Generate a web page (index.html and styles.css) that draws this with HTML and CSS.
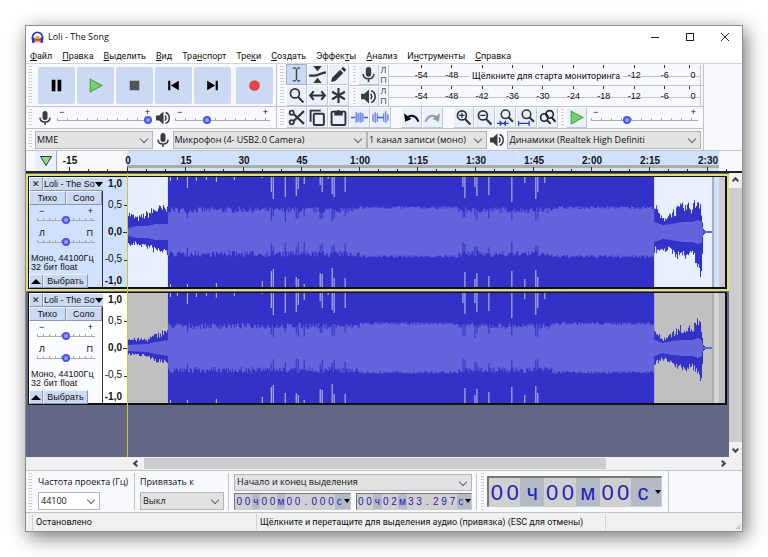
FILE: index.html
```
<!DOCTYPE html>
<html lang="ru">
<head>
    <meta charset="UTF-8">
    <meta name="viewport" content="width=device-width, initial-scale=1.0">
    <title>Loli - The Song</title>
    <link rel="stylesheet" href="styles.css">
</head>
<body>
    <!-- Icon set -->
    <svg class="defs" width="0" height="0">
        <symbol id="mic" viewBox="0 0 16 16"><rect x="5.500" y="1" width="5" height="9" rx="2.500" fill="#3c3c3c"/><path d="M3 7.500c0 3 2 4.500 5 4.500s5-1.500 5-4.500M8 12v3" fill="none" stroke="#3c3c3c" stroke-width="1.500"/></symbol>
        <symbol id="speaker" viewBox="0 0 16 16"><path d="M1 5.500h3L8.500 1.500v13L4 10.500H1z" fill="#3c3c3c"/><path d="M10 5.500c1.300 1.300 1.300 3.700 0 5M10.500 2.500c5 1.500 5 9.500 0 11" fill="none" stroke="#3c3c3c" stroke-width="1.500"/></symbol>
        <symbol id="play" viewBox="0 0 16 16"><path d="M3 2l11 6-11 6z" fill="#74d16c" stroke="#489c48"/></symbol>
        <symbol id="ibeam" viewBox="0 0 16 16"><path d="M4.500 2h3M8.500 2h3M8 2.500v11M4.500 14h3M8.500 14h3" fill="none" stroke="#444" stroke-width="1.400"/></symbol>
        <symbol id="envelope" viewBox="0 0 16 16"><path d="M4 0h8L8 5zM4 16h8l-4-5z" fill="#333"/><path d="M0 9h5c3 0 5-2 11-3" fill="none" stroke="#333" stroke-width="2"/></symbol>
        <symbol id="pencil" viewBox="0 0 16 16"><path d="M1 15l1-4 7.500-7.500 3 3L5 14zM10.500 2.500l1.500-1.500c.6-.6 3.600 2.400 3 3L13.500 5.500z" fill="#333"/></symbol>
        <symbol id="lens" viewBox="0 0 16 16"><circle cx="6.500" cy="6" r="4.200" fill="none" stroke="#333" stroke-width="1.600"/><path d="M9.500 9.500L14.500 14.500" stroke="#333" stroke-width="2"/></symbol>
        <symbol id="shift" viewBox="0 0 16 16"><path d="M2 8h12M4.500 4L1 8l3.500 4M11.500 4L15 8l-3.500 4" fill="none" stroke="#333" stroke-width="1.800"/></symbol>
        <symbol id="multi" viewBox="0 0 16 16"><path d="M8 1v14M2 4.500l12 7M14 4.500l-12 7" stroke="#333" stroke-width="2"/></symbol>
        <symbol id="cut" viewBox="0 0 16 16"><circle cx="3.500" cy="3.500" r="2" fill="none" stroke="#333" stroke-width="1.600"/><circle cx="3.500" cy="12.500" r="2" fill="none" stroke="#333" stroke-width="1.600"/><path d="M5 4.500L15 14M5 11.500L15 2" stroke="#333" stroke-width="2"/></symbol>
        <symbol id="copy" viewBox="0 0 16 16"><path d="M1.500 12V1.500H11" fill="none" stroke="#333" stroke-width="1.800"/><rect x="4.500" y="4.500" width="9.500" height="10.500" rx="1" fill="none" stroke="#333" stroke-width="1.800"/></symbol>
        <symbol id="paste" viewBox="0 0 16 16"><rect x="1.500" y="2.500" width="13" height="12.500" rx="1" fill="none" stroke="#333" stroke-width="1.800"/><path d="M4 2h2.500a1.600 1.600 0 0 1 3 0H12v4H4z" fill="#333"/></symbol>
        <symbol id="trim" viewBox="0 0 16 16"><path d="M0 8h4M12 8h4" stroke="#4a5ad8" stroke-width="1.500"/><path d="M5 3v10M7 4v8M9 3v10M11 4v8" stroke="#7f8ee8" stroke-width="1.700"/></symbol>
        <symbol id="silence" viewBox="0 0 16 16"><path d="M1 5v7M3 3v10M5 4v8M11 4v8M13 2v11M15 5v6" stroke="#7f8ee8" stroke-width="1.500"/><path d="M5 8h6" stroke="#4a5ad8" stroke-width="1.500"/></symbol>
        <symbol id="undo" viewBox="0 0 16 16"><path d="M3 9.500C6 5 12 5 14.500 12" fill="none" stroke="currentColor" stroke-width="2"/><path d="M1 4l1 8 6-2.500z" fill="currentColor"/></symbol>
        <symbol id="zoom-in" viewBox="0 0 16 16"><use href="#lens"/><path d="M4 6h5M6.500 3.500v5" stroke="#333" stroke-width="1.200"/></symbol>
        <symbol id="zoom-out" viewBox="0 0 16 16"><use href="#lens"/><path d="M4 6h5" stroke="#333" stroke-width="1.200"/></symbol>
        <symbol id="zoom-sel" viewBox="0 0 16 16"><circle cx="8" cy="5" r="4" fill="none" stroke="#333" stroke-width="1.500"/><path d="M11 8l4 4" stroke="#333" stroke-width="2"/><path d="M0 13.500h11M3 11.500l1.500 2L3 15.500zM8 11.500l-1.500 2 1.500 2z" fill="#2e3fd0" stroke="#2e3fd0"/></symbol>
        <symbol id="zoom-fit" viewBox="0 0 16 16"><circle cx="8" cy="5" r="4" fill="none" stroke="#333" stroke-width="1.500"/><path d="M11 8l4 4" stroke="#333" stroke-width="2"/><path d="M.5 11v5M10.500 11v5M1 13.500h9" stroke="#2e3fd0" stroke-width="1.200"/></symbol>
        <symbol id="zoom-toggle" viewBox="0 0 16 16"><circle cx="5" cy="8" r="3.500" fill="none" stroke="#222" stroke-width="1.500"/><circle cx="10" cy="5" r="3.500" fill="none" stroke="#222" stroke-width="1.500"/><path d="M7 10l4 4M12 8l3.500 4" stroke="#222" stroke-width="1.800"/></symbol>
    </svg>

    <div class="window">
        <header class="titlebar">
            <svg class="logo" viewBox="0 0 14 14"><path d="M1.500 9V7a5.500 5.500 0 0 1 11 0v2" fill="none" stroke="#2a35d8" stroke-width="1.800"/><path d="M4 7.500l1.500-1.500L7 5l1.500 1L10 7.500V12H4z" fill="#f6a623"/><path d="M4 8.500h6v2H4z" fill="#e8402a"/><rect x="1" y="7" width="3" height="6" rx="1.200" fill="#2a35d8"/><rect x="10" y="7" width="3" height="6" rx="1.200" fill="#2a35d8"/></svg>
            <h1>Loli - The Song</h1>
            <div class="window-buttons">
                <button aria-label="Свернуть"><svg viewBox="0 0 10 10"><path d="M1 5.500h8" stroke="#222"/></svg></button>
                <button aria-label="Развернуть"><svg viewBox="0 0 10 10"><rect x="1.500" y="1.500" width="7" height="7" fill="none" stroke="#222"/></svg></button>
                <button aria-label="Закрыть"><svg viewBox="0 0 10 10"><path d="M1 1l8 8M9 1L1 9" stroke="#222"/></svg></button>
            </div>
        </header>

        <nav class="menu">
            <a href="#"><u>Ф</u>айл</a>
            <a href="#"><u>П</u>равка</a>
            <a href="#"><u>В</u>ыделить</a>
            <a href="#"><u>В</u>ид</a>
            <a href="#">Тра<u>н</u>спорт</a>
            <a href="#">Тре<u>к</u>и</a>
            <a href="#"><u>С</u>оздать</a>
            <a href="#">Эффек<u>т</u>ы</a>
            <a href="#"><u>А</u>нализ</a>
            <a href="#">И<u>н</u>струменты</a>
            <a href="#"><u>С</u>правка</a>
        </nav>

        <div class="dock">
            <div class="dock-left">
                <div class="bar transport">
                    <span class="grip"></span>
                    <button aria-label="Пауза"><svg viewBox="0 0 16 16"><path d="M3.500 2.500h3.500v11H3.500zM9 2.500h3.500v11H9z"/></svg></button>
                    <button aria-label="Воспроизвести"><svg viewBox="0 0 16 16"><use href="#play"/></svg></button>
                    <button aria-label="Стоп"><svg viewBox="0 0 16 16"><path d="M3.500 3.500h9v9h-9z" fill="#555"/></svg></button>
                    <button aria-label="К началу"><svg viewBox="0 0 16 16"><path d="M3 3.500h2v9H3zM13 3.500v9L5.500 8z"/></svg></button>
                    <button aria-label="К концу"><svg viewBox="0 0 16 16"><path d="M11 3.500h2v9h-2zM3 3.500v9L10.500 8z"/></svg></button>
                    <button class="record" aria-label="Запись"><svg viewBox="0 0 16 16"><circle cx="8" cy="8" r="5" fill="#e04646"/></svg></button>
                </div>
                <div class="bar mixer">
                    <span class="grip"></span>
                    <svg class="icon"><use href="#mic"/></svg>
                    <label class="slider"><span>−</span><span>+</span><input type="range" value="100" aria-label="Громкость записи"></label>
                    <svg class="icon"><use href="#speaker"/></svg>
                    <label class="slider"><span>−</span><span>+</span><input type="range" value="32" aria-label="Громкость воспроизведения"></label>
                </div>
            </div>

            <div class="dock-main">
                <div class="bar upper">
                    <span class="grip"></span>
                    <div class="tools">
                        <button class="tool active" aria-label="Выделение"><svg><use href="#ibeam"/></svg></button>
                        <button class="tool" aria-label="Огибающая"><svg><use href="#envelope"/></svg></button>
                        <button class="tool" aria-label="Рисование"><svg><use href="#pencil"/></svg></button>
                        <button class="tool" aria-label="Масштаб"><svg><use href="#lens"/></svg></button>
                        <button class="tool" aria-label="Перемещение"><svg><use href="#shift"/></svg></button>
                        <button class="tool" aria-label="Мультиинструмент"><svg><use href="#multi"/></svg></button>
                    </div>
                    <div class="meters">
                        <div class="meter">
                            <span class="grip"></span>
                            <button class="tool" aria-label="Индикатор записи"><svg><use href="#mic"/></svg></button>
                            <div class="channels"><span>Л</span><span>П</span></div>
                            <div class="scale"><span>-54</span><span>-48</span><span></span><span></span><span></span><span></span><span></span><span>-12</span><span>-6</span><span>0</span>
                                <button class="monitor">Щёлкните для старта мониторинга</button>
                            </div>
                        </div>
                        <div class="meter">
                            <span class="grip"></span>
                            <button class="tool" aria-label="Индикатор воспроизведения"><svg><use href="#speaker"/></svg></button>
                            <div class="channels"><span>Л</span><span>П</span></div>
                            <div class="scale"><span>-54</span><span>-48</span><span>-42</span><span>-36</span><span>-30</span><span>-24</span><span>-18</span><span>-12</span><span>-6</span><span>0</span></div>
                        </div>
                    </div>
                </div>
                <div class="bar edit">
                    <span class="grip"></span>
                    <div class="group">
                        <button class="tool" aria-label="Вырезать"><svg><use href="#cut"/></svg></button>
                        <button class="tool" aria-label="Копировать"><svg><use href="#copy"/></svg></button>
                        <button class="tool" aria-label="Вставить"><svg><use href="#paste"/></svg></button>
                        <button class="tool" aria-label="Обрезать"><svg><use href="#trim"/></svg></button>
                        <button class="tool" aria-label="Тишина"><svg><use href="#silence"/></svg></button>
                    </div>
                    <div class="group">
                        <button class="tool" aria-label="Отменить"><svg><use href="#undo"/></svg></button>
                        <button class="tool redo" aria-label="Вернуть"><svg><use href="#undo"/></svg></button>
                    </div>
                    <div class="group">
                        <button class="tool" aria-label="Приблизить"><svg><use href="#zoom-in"/></svg></button>
                        <button class="tool" aria-label="Отдалить"><svg><use href="#zoom-out"/></svg></button>
                        <button class="tool" aria-label="Выделенное по ширине"><svg><use href="#zoom-sel"/></svg></button>
                        <button class="tool" aria-label="Проект по ширине"><svg><use href="#zoom-fit"/></svg></button>
                        <button class="tool" aria-label="Переключить масштаб"><svg><use href="#zoom-toggle"/></svg></button>
                    </div>
                    <span class="grip"></span>
                    <button class="tool" aria-label="Воспроизвести на скорости"><svg><use href="#play"/></svg></button>
                    <label class="slider"><span>−</span><span>+</span><input type="range" value="32" aria-label="Скорость"></label>
                </div>
            </div>
            <div class="dock-end"></div>
        </div>

        <div class="bar devices">
            <span class="grip"></span>
            <span class="drop host"><select aria-label="Хост"><option>MME</option></select></span>
            <svg class="icon"><use href="#mic"/></svg>
            <span class="drop input"><select aria-label="Устройство записи"><option>Микрофон (4- USB2.0 Camera)</option></select></span>
            <span class="drop count"><select aria-label="Каналы записи"><option>1 канал записи (моно)</option></select></span>
            <svg class="icon"><use href="#speaker"/></svg>
            <span class="drop output"><select aria-label="Устройство воспроизведения"><option>Динамики (Realtek High Definiti</option></select></span>
            <span class="dock-end"></span>
        </div>

        <div class="timeline">
            <button class="pin" aria-label="Указатель"><svg viewBox="0 0 14 12"><path d="M1.500 1.500h11L7 10.500z" fill="#8be08b" stroke="#333"/></svg></button>
            <div class="ruler" id="ruler"></div>
        </div>

        <main class="workspace">
            <div class="tracks">
                <section class="track selected">
                    <div class="panel">
                        <div class="panel-row head"><button aria-label="Закрыть трек">✕</button><button class="name">Loli - The So<i></i></button></div>
                        <div class="panel-row"><button>Тихо</button><button>Соло</button></div>
                        <label class="slider"><span>−</span><span>+</span><input type="range" aria-label="Усиление"></label>
                        <label class="slider"><span>Л</span><span>П</span><input type="range" aria-label="Панорама"></label>
                        <p>Моно, 44100Гц<br>32 бит float</p>
                        <div class="panel-row foot"><button aria-label="Свернуть трек"><i></i></button><button>Выбрать</button></div>
                    </div>
                    <div class="levels"><b>1,0</b><span>0,5</span><b>0,0</b><span>-0,5</span><b>-1,0</b></div>
                    <svg class="wave" data-track="0" viewBox="0 0 599 110" preserveAspectRatio="none"></svg>
                </section>
                <section class="track">
                    <div class="panel">
                        <div class="panel-row head"><button aria-label="Закрыть трек">✕</button><button class="name">Loli - The So<i></i></button></div>
                        <div class="panel-row"><button>Тихо</button><button>Соло</button></div>
                        <label class="slider"><span>−</span><span>+</span><input type="range" aria-label="Усиление"></label>
                        <label class="slider"><span>Л</span><span>П</span><input type="range" aria-label="Панорама"></label>
                        <p>Моно, 44100Гц<br>32 бит float</p>
                        <div class="panel-row foot"><button aria-label="Свернуть трек"><i></i></button><button>Выбрать</button></div>
                    </div>
                    <div class="levels"><b>1,0</b><span>0,5</span><b>0,0</b><span>-0,5</span><b>-1,0</b></div>
                    <svg class="wave" data-track="1" viewBox="0 0 599 110" preserveAspectRatio="none"></svg>
                </section>
                <div class="cursor"></div>
            </div>
            <div class="vscroll"><i class="arrow up"></i><span></span><i class="arrow down"></i></div>
        </main>
        <div class="hscroll"><i class="arrow left"></i><span></span><i class="arrow right"></i></div>

        <footer>
            <div class="bar selection">
                <span class="grip"></span>
                <div class="field rate">
                    <label for="rate">Частота проекта (Гц)</label>
                    <span class="drop white"><select id="rate"><option>44100</option></select></span>
                </div>
                <div class="field snap">
                    <label for="snap">Привязать к</label>
                    <span class="drop"><select id="snap"><option>Выкл</option></select></span>
                </div>
                <div class="field range">
                    <span class="drop"><select aria-label="Тип выделения"><option>Начало и конец выделения</option></select></span>
                    <div class="times">
                        <div class="time" data-time="00ч00м00.000с"></div>
                        <div class="time" data-time="00ч02м33.297с"></div>
                    </div>
                </div>
                <span class="grip"></span>
                <div class="time big" data-time="00ч00м00с"></div>
                <span class="rest"></span>
            </div>
            <div class="status">
                <span class="stub"></span>
                <span class="state">Остановлено</span>
                <span class="hint">Щёлкните и перетащите для выделения аудио (привязка) (ESC для отмены)</span>
                <span class="corner"></span>
            </div>
        </footer>
    </div>
    <script src="script.js"></script>
</body>
</html>
```
FILE: styles.css
```
* {
    margin: 0;
    padding: 0;
    box-sizing: border-box;
}

body {
    min-height: 100vh;
    padding: 25px;
    display: flex;
    background: #fff;
    color: #111;
    font: 10px/12px "Liberation Sans", Arial, sans-serif;
}

.defs {
    position: absolute;
}

button, select {
    font: inherit;
    color: inherit;
    border: none;
    background: none;
}

button {
    display: flex;
    align-items: center;
    justify-content: center;
}

.window {
    flex: 1;
    min-width: 0;
    display: flex;
    flex-direction: column;
    border: 1px solid #8e8e8e;
    background: #f7f9ff;
    box-shadow: 3px 5px 18px rgba(0, 0, 0, 0.55);
}

/* Title and menu */
.titlebar {
    height: 22px;
    padding-left: 5px;
    display: flex;
    align-items: center;
    gap: 4px;
    background: #fff;
}

.logo {
    width: 13px;
    height: 13px;
}

h1 {
    flex: 1;
    font: 9px/14px "Open Sans", sans-serif;
}

.window-buttons {
    display: flex;
}

.window-buttons button {
    width: 35px;
    height: 20px;
}

.window-buttons svg {
    width: 10px;
    height: 10px;
}

.menu {
    height: 16px;
    padding-left: 4px;
    display: flex;
    align-items: center;
    gap: 10px;
    background: #fff;
    border-bottom: 1px solid #d4d4d4;
    font: 9px/14px Roboto, sans-serif;
}

.menu a {
    color: #111;
    text-decoration: none;
}

/* Toolbars */
.dock {
    display: flex;
}

.dock-left {
    width: 251px;
    border-right: 1px solid #c4c4c4;
}

.dock-main {
    flex: 1;
    min-width: 0;
}

.dock-end {
    width: 39px;
    align-self: stretch;
    border-left: 1px solid #c4c4c4;
}

.bar {
    display: flex;
    align-items: center;
    border-bottom: 1px solid #c4c4c4;
}

.grip {
    flex: none;
    width: 8px;
    align-self: stretch;
    border: solid #f7f9ff;
    border-width: 2px 2px 2px 3px;
    background: repeating-linear-gradient(#cfcfcf 0 1px, #f7f9ff 1px 3px);
}

.transport, .upper {
    height: 43px;
}

.transport {
    gap: 2px;
}

.transport .grip {
    margin-right: 2px;
}

.transport button {
    width: 37px;
    height: 37px;
    border-radius: 2px;
    background: #ccd9f2;
}

.transport .record {
    margin-left: 3px;
}

.transport svg {
    width: 17px;
    height: 17px;
}

.mixer, .edit {
    height: 22px;
}

.icon {
    flex: none;
    width: 16px;
    height: 16px;
}

.mixer {
    gap: 4px;
}

.mixer .slider {
    flex: 1;
}

.mixer .slider:last-child {
    margin-right: 6px;
}

.mixer .icon {
    margin-left: -1px;
}

.slider {
    display: grid;
    grid-template-columns: 1fr auto;
    padding: 0 2px 3px;
    font-size: 9px;
    line-height: 8px;
}

.slider input {
    grid-column: 1 / 3;
    min-width: 0;
    margin: 0 -2px;
    height: 8px;
    appearance: none;
    background:
        linear-gradient(#aaa, #aaa) 0 4px / 100% 1px no-repeat,
        repeating-linear-gradient(90deg, #aaa 0 1px, transparent 1px 10px) 0 2px / 100% 3px no-repeat;
}

.slider input::-webkit-slider-thumb {
    appearance: none;
    width: 8px;
    height: 8px;
    border: 2px solid #4a55e6;
    border-radius: 50%;
    background: #98a0f4;
}

.tool {
    flex: none;
    width: 21px;
    height: 21px;
    border: 1px solid;
    border-color: #fff #c3c9d6 #c3c9d6 #fff;
    background: #e9f1ff;
}

.tool.active {
    background: #ccd9f2;
    border-color: #9fb0cc;
}

.tool svg {
    width: 17px;
    height: 17px;
}

.redo {
    color: #999;
}

.redo svg {
    transform: scaleX(-1);
}

.tools {
    display: grid;
    grid-template-columns: repeat(3, 21px);
    margin-right: 1px;
}

.upper > .grip, .edit > .grip:first-child {
    width: 9px;
}

.meters {
    flex: 1;
    min-width: 0;
}

.meter {
    height: 21px;
    display: flex;
    align-items: center;
}

.meter + .meter {
    border-top: 1px solid #c4c4c4;
}

.channels {
    width: 9px;
    display: flex;
    flex-direction: column;
    text-align: center;
    font-size: 9px;
    line-height: 10px;
    color: #456;
}

.scale {
    flex: 1;
    position: relative;
    height: 20px;
    margin-right: 2px;
    padding-left: 17px;
    display: flex;
    border: solid #c4c4c4;
    border-width: 0 1px;
    background: linear-gradient(#c4c4c4, #c4c4c4) 0 11px / 100% 1px no-repeat;
}

.scale span {
    flex: 1;
    text-align: center;
    background: linear-gradient(#333, #333) center top / 1px 3px no-repeat;
    line-height: 20px;
    font-size: 9px;
}

.scale span:nth-child(10) {
    flex: none;
    width: 20px;
    padding-left: 6px;
}

.monitor {
    position: absolute;
    left: 80px;
    top: 5px;
    height: 12px;
    padding: 0 3px;
    background: #f7f9ff;
    font: 9px/12px Roboto, sans-serif;
    white-space: nowrap;
}

.group {
    display: flex;
    margin-right: 10px;
}

.group:nth-of-type(3) {
    margin-right: 0;
}

.edit .slider {
    flex: 1;
    margin: 0 5px 0 4px;
}

.devices {
    height: 22px;
    background: #f7f9ff;
}

.drop {
    position: relative;
    display: flex;
    height: 18px;
    border: 1px solid #b5b5b5;
    background: #e2e2e2;
}

.drop select {
    width: 100%;
    padding: 0 14px 0 2px;
    appearance: none;
    outline: none;
}

.drop::after {
    content: "";
    position: absolute;
    right: 5px;
    top: 4px;
    width: 5px;
    height: 5px;
    border: solid #666;
    border-width: 0 1px 1px 0;
    transform: rotate(45deg);
    pointer-events: none;
}

.devices .drop select {
    padding-left: 1px;
    font: 9px/14px "Open Sans", sans-serif;
}

.devices .icon {
    margin: 0 2px;
}

.host {
    flex: 117;
    margin-left: 1px;
}

.input {
    flex: 195;
}

.count {
    flex: 120;
}

.output {
    flex: 194;
}

.devices .dock-end {
    margin-left: 2px;
}

/* Time ruler */
.timeline {
    display: flex;
    height: 22px;
    border-bottom: 2px solid #222;
}

.pin {
    width: 22px;
    margin-left: 9px;
    border-right: 1px solid #aaa;
    background: #e9f1ff;
}

.pin svg {
    width: 14px;
    height: 12px;
}

.ruler {
    flex: 1;
    min-width: 0;
    padding-left: 12px;
    display: flex;
    overflow: hidden;
    background:
        linear-gradient(#ababab, #ababab) 70px 14px / 592px 3px no-repeat,
        linear-gradient(#d0e0ff, #d0e0ff) 70px 0 / 592px 100% no-repeat;
}

.ruler span {
    flex: none;
    width: 58px;
    font: bold 10px/20px "Liberation Sans", Arial, sans-serif;
    background:
        linear-gradient(#333, #333) 0 100% / 1px 4px no-repeat,
        linear-gradient(#333, #333) 19px 100% / 1px 2px no-repeat,
        linear-gradient(#333, #333) 38px 100% / 1px 2px no-repeat;
}

.ruler b {
    display: block;
    width: 58px;
    margin-left: -28px;
    text-align: center;
}

/* Tracks */
.workspace {
    flex: 1;
    display: flex;
    background: #646784;
}

.tracks {
    flex: 1;
    min-width: 0;
    position: relative;
    padding: 3px 1px 0;
}

.track {
    display: flex;
    height: 113px;
    margin: 0 1px 3px 1px;
    border: 1px solid #111;
    border-width: 1px 2px 2px 1px;
}

.track.selected {
    outline: 2px solid #dede74;
}

.panel {
    flex: none;
    width: 74px;
    background: #fbfcff;
    border-right: 1px solid #333;
    font-size: 9px;
    line-height: 9px;
}

.selected .panel {
    background: #d0e0ff;
}

.panel-row {
    display: flex;
    height: 14px;
}

.panel-row button {
    flex: 1;
    border: 1px solid;
    border-color: #eef3ff #8c97ad #8c97ad #eef3ff;
    background: #ccd9f2;
    white-space: nowrap;
}

.panel-row.head button:first-child, .panel-row.foot button:first-child {
    flex: none;
    width: 14px;
}

.panel-row i {
    border: solid transparent;
    border-width: 5px 4px 0;
    border-top-color: #000;
}

.foot i {
    border-width: 0 5px 5px;
    border-bottom-color: #000;
}

.panel .slider {
    margin: 2px 7px 0 8px;
    height: 20px;
}

.panel .slider input {
    background:
        linear-gradient(#aaa, #aaa) 0 4px / 100% 1px no-repeat,
        repeating-linear-gradient(90deg, #aaa 0 1px, transparent 1px 6px) 0 2px / 100% 3px no-repeat;
}

.panel p {
    margin: 5px 0 2px;
    padding-left: 2px;
}

.foot {
    padding-right: 14px;
}

.levels {
    flex: none;
    width: 24px;
    padding-right: 5px;
    display: grid;
    grid-template-rows: 13px 1fr 23px 1fr 13px;
    align-items: center;
    text-align: right;
    background:
        linear-gradient(#333, #333) 100% 28px / 3px 1px no-repeat,
        linear-gradient(#333, #333) 100% 55px / 4px 1px no-repeat,
        linear-gradient(#333, #333) 100% 83px / 3px 1px no-repeat,
        #fff;
}

.selected .levels {
    background-color: #d0e0ff;
}

.wave {
    flex: 1;
    min-width: 0;
    height: 100%;
}

.cursor {
    position: absolute;
    left: 101px;
    top: 0;
    bottom: 0;
    width: 1px;
    background: #cccc20;
}

/* Scrollbars */
.vscroll {
    width: 13px;
    display: flex;
    flex-direction: column;
    align-items: center;
    background: #f0f0f0;
}

.vscroll span {
    flex: 1;
    width: 100%;
    background: #cdcdcd;
}

.arrow {
    flex: none;
    width: 5px;
    height: 5px;
    margin: 5px;
    border: solid #444;
    border-width: 2px 0 0 2px;
    transform: rotate(45deg);
}

.arrow.down {
    transform: rotate(225deg);
}

.arrow.left {
    transform: rotate(-45deg);
}

.arrow.right {
    transform: rotate(135deg);
}

.hscroll {
    height: 13px;
    padding: 1px 12px 1px 103px;
    display: flex;
    align-items: center;
    background: #f0f0f0;
}

.hscroll span {
    width: 462px;
    align-self: stretch;
    margin-right: auto;
    background: #cdcdcd;
}

/* Selection toolbar */
.selection {
    height: 43px;
    border-top: 1px solid #c4c4c4;
    font: 9px/12px "Open Sans", sans-serif;
}

.field {
    display: flex;
    flex-direction: column;
    gap: 2px;
    padding-right: 4px;
    margin-right: 5px;
    border-right: 1px solid #c4c4c4;
}

.field label {
    height: 17px;
    line-height: 17px;
    white-space: nowrap;
}

.rate {
    width: 97px;
    margin-left: 4px;
}

.rate .drop {
    width: 62px;
}

.white {
    background: #fff;
}

.snap {
    width: 89px;
}

.range {
    width: 243px;
    margin-right: 1px;
}

.range .drop {
    height: 17px;
}

.times {
    display: flex;
    gap: 5px;
}

.time {
    flex: 1;
    display: flex;
    height: 17px;
    padding-right: 6px;
    border: 1px solid;
    border-color: #777 #ccc #ccc #777;
    position: relative;
    background: #b4b9c6;
    color: #2222bb;
    font: 10px/16px "Liberation Sans", Arial, sans-serif;
}

.time span {
    flex: 1;
    text-align: center;
    background: #d0d0d0;
}

.time .unit {
    background: #b4b9c6;
}

.time::after {
    content: "";
    position: absolute;
    right: 0;
    top: 5px;
    border: solid transparent;
    border-width: 4px 3px 0;
    border-top-color: #000;
}

.time.big {
    flex: none;
    width: 175px;
    height: 31px;
    margin-left: 1px;
    border-width: 2px 1px 1px 2px;
    font-size: 22px;
    line-height: 30px;
}

.big .unit {
    flex: none;
    width: 24px;
}

.big::after {
    top: 12px;
}

.rest {
    align-self: stretch;
    margin-left: 6px;
    border-left: 1px solid #c4c4c4;
}

.status {
    display: flex;
    height: 18px;
    padding: 1px 0;
    background: #f0f0f0;
    font: 9px/16px Roboto, sans-serif;
}

.status span {
    padding-left: 3px;
    border-right: 1px solid #d4d4d4;
    white-space: nowrap;
}

.status .stub {
    width: 7px;
}

.state {
    width: 224px;
}

.hint {
    width: 349px;
}

.status .corner {
    width: 6px;
    height: 6px;
    margin: auto 2px 1px auto;
    border: none;
    background: repeating-linear-gradient(135deg, transparent 0 1px, #aaa 1px 2px);
    clip-path: polygon(100% 0, 100% 100%, 0 100%);
}
```
FILE: script.js
```
// Ruler labels, one every 15 seconds
const ruler = document.getElementById('ruler');
for (let s = -15; s <= 150; s += 15) {
    const min = Math.floor(s / 60);
    const label = s < 60 ? s : min + ':' + String(s % 60).padStart(2, '0');
    ruler.innerHTML += `<span><b>${label}</b></span>`;
}

// Time fields: digits and units get separate cells
document.querySelectorAll('.time').forEach(el => {
    el.innerHTML = [...el.dataset.time]
        .map(c => `<span class="${/[чмс]/.test(c) ? 'unit' : ''}">${c}</span>`)
        .join('');
});

let seed = 7;
function rnd() {
    seed = (seed * 16807) % 2147483647;
    return seed / 2147483647;
}

// Envelope points: [x, up, down, rms]
const envelopes = [
    {
        clip: '#e8f0ff', after: '#d0e2ff', rest: '#d0d0d0',
        intro: [[0, 20, 14, 4], [10, 14, 13, 6], [20, 19, 16, 6], [28, 24, 20, 8], [41, 24, 22, 8]],
        outro: [[528, 27, 21, 10], [536, 13, 17, 7], [545, 20, 22, 8], [556, 26, 27, 10], [566, 26, 22, 10], [571, 33, 36, 12], [574, 30, 45, 11], [575, 22, 38, 10], [577, 3, 3, 1], [579, 1, 1, 1], [586, 1, 1, 1]]
    },
    {
        clip: '#c0c0c0', after: '#d6d6d6', rest: '#c0c0c0',
        intro: [[0, 9, 7, 3], [20, 9, 8, 4], [28, 13, 14, 6], [41, 19, 17, 8]],
        outro: [[528, 18, 17, 8], [536, 9, 11, 5], [545, 15, 17, 7], [556, 21, 22, 8], [566, 20, 20, 8], [571, 28, 27, 10], [574, 24, 38, 9], [575, 16, 30, 8], [577, 3, 3, 1], [579, 1, 1, 1], [586, 1, 1, 1]]
    }
];

// Gaps in the loud part: [x, top length, bottom length]
const gaps = [
    [2, 4, 3], [9, 3, 0], [19, 11, 3], [28, 4, 0], [38, 3, 0], [48, 5, 4], [66, 3, 0],
    [103, 15, 16], [105, 22, 18], [94, 1, 6], [117, 20, 10], [128, 19, 10], [130, 12, 8], [136, 7, 3],
    [152, 8, 14], [154, 15, 13], [160, 2, 0], [164, 17, 19], [166, 20, 9], [177, 15, 9],
    [295, 10, 0], [297, 21, 15], [307, 10, 8], [309, 19, 14], [321, 18, 11],
    [344, 25, 16], [357, 6, 8], [368, 22, 17], [370, 15, 10], [377, 6, 0]
];

function at(points, x, k) {
    for (let i = 1; i < points.length; i++) {
        const a = points[i - 1], b = points[i];
        if (x <= b[0]) return a[k] + (b[k] - a[k]) * (x - a[0]) / (b[0] - a[0]);
    }
    return 0;
}

function area(cols) {
    const top = cols.map(c => `${c[0]},${(55 - c[1]).toFixed(1)} ${c[0] + 1},${(55 - c[1]).toFixed(1)}`);
    const bottom = cols.map(c => `${c[0] + 1},${(55 + c[2]).toFixed(1)} ${c[0]},${(55 + c[2]).toFixed(1)}`).reverse();
    return top.concat(bottom).join(' ');
}

document.querySelectorAll('.wave').forEach(svg => {
    const env = envelopes[svg.dataset.track];
    const peak = [], rms = [];
    for (let x = 0; x < 586; x++) {
        if (x >= 41 && x < 528) {
            const calm = (x > 232 && x < 332) || x > 425;
            const base = calm ? 24 : 20;
            const spread = calm ? 3 : 6;
            const dip = gaps.some(g => g[1] > 6 && Math.abs(g[0] + 41 - x) < 1) ? 9 : 0;
            peak.push([x, 55, 55]);
            rms.push([x, base - dip + rnd() * spread - 1, base - dip + rnd() * spread - 1]);
        } else {
            const part = x < 41 ? env.intro : env.outro;
            const quiet = x > 576;
            const k = quiet ? 1 : 0.7 + rnd() * 0.45;
            const m = quiet ? 1 : 0.7 + rnd() * 0.4;
            peak.push([x, at(part, x, 1) * k, at(part, x, 2) * m]);
            rms.push([x, at(part, x, 3), at(part, x, 3)]);
        }
    }
    const lines = gaps.map(([x, t, b]) =>
        `<rect x="${x + 41}" y="0" width="1" height="${t}"/><rect x="${x + 41}" y="${110 - b}" width="1" height="${b}"/>`
    ).join('');
    svg.innerHTML = `
        <rect width="587" height="110" fill="${env.clip}"/>
        <polygon points="${area(peak)}" fill="#3232c8"/>
        <polygon points="${area(rms)}" fill="#6464dc"/>
        <g fill="#c4c8f4">${lines}</g>
        <rect x="586" width="2" height="110" fill="#a8aeb8"/>
        <rect x="588" width="5" height="110" fill="${env.after}"/>
        <rect x="593" width="6" height="110" fill="${env.rest}"/>`;
});
```
